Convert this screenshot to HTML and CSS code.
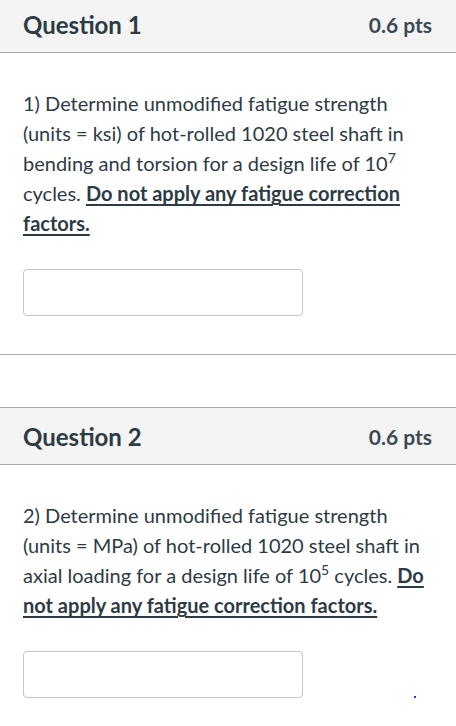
FILE: index.html
```html
<!DOCTYPE html>
<html lang="en">
<head>
<meta charset="utf-8">
<title>Quiz</title>
<link rel="stylesheet" href="styles.css">
</head>
<body>
<div class="page">
  <div class="question">
    <div class="q-header">
      <span class="q-title">Question 1</span>
      <span class="q-points">0.6 pts</span>
    </div>
    <div class="q-body">
      <p class="q-text">1) Determine unmodified fatigue strength (units = ksi) of hot-rolled 1020 steel shaft in bending and torsion for a design life of 10<sup>7</sup> cycles. <strong class="emph">Do not apply any fatigue correction factors.</strong></p>
      <div class="answer"></div>
    </div>
  </div>
  <div class="question">
    <div class="q-header">
      <span class="q-title">Question 2</span>
      <span class="q-points">0.6 pts</span>
    </div>
    <div class="q-body">
      <p class="q-text">2) Determine unmodified fatigue strength (units = MPa) of hot-rolled 1020 steel shaft in axial loading for a design life of 10<sup>5</sup> cycles. <strong class="emph">Do not apply any fatigue correction factors.</strong></p>
      <div class="answer"></div>
    </div>
  </div>
  <span class="dot"></span>
</div>
</body>
</html>
```
FILE: styles.css
```css
html, body {
  margin: 0;
  padding: 0;
  background: #ffffff;
}
body {
  font-family: Lato, "Open Sans", sans-serif;
  color: #2d3b45;
}
.page {
  position: relative;
  margin-top: -5px;
}
.question {
  border-top: 1px solid #aaaaaa;
  border-bottom: 1px solid #aaaaaa;
  margin-bottom: 52px;
}
.q-header {
  height: 56px;
  background: #f4f4f4;
  border-bottom: 1px solid #aaaaaa;
  display: flex;
  align-items: center;
  justify-content: space-between;
  padding: 0 24px 0 23px;
}
.q-title {
  font-size: 24px;
  font-weight: 700;
  color: #2d3b45;
}
.q-points {
  font-size: 21px;
  font-weight: 700;
  color: #3d4a53;
}
.q-body {
  padding: 35px 23px 38px 23px;
}
.q-text {
  margin: 0;
  font-size: 20px;
  line-height: 30px;
  width: 406px;
}
.q-text sup {
  font-size: 14px;
  line-height: 0;
  vertical-align: 8px;
}
.emph {
  font-weight: 700;
  text-decoration: underline;
  text-decoration-thickness: 2px;
  text-underline-offset: 3px;
}
.answer {
  margin-top: 31px;
  width: 278px;
  height: 45px;
  border: 1px solid #c5c5c5;
  border-radius: 4px;
  background: #fff;
}
.dot {
  position: absolute;
  left: 414px;
  top: 701px;
  width: 2px;
  height: 2px;
  background: #2233dd;
}
```
